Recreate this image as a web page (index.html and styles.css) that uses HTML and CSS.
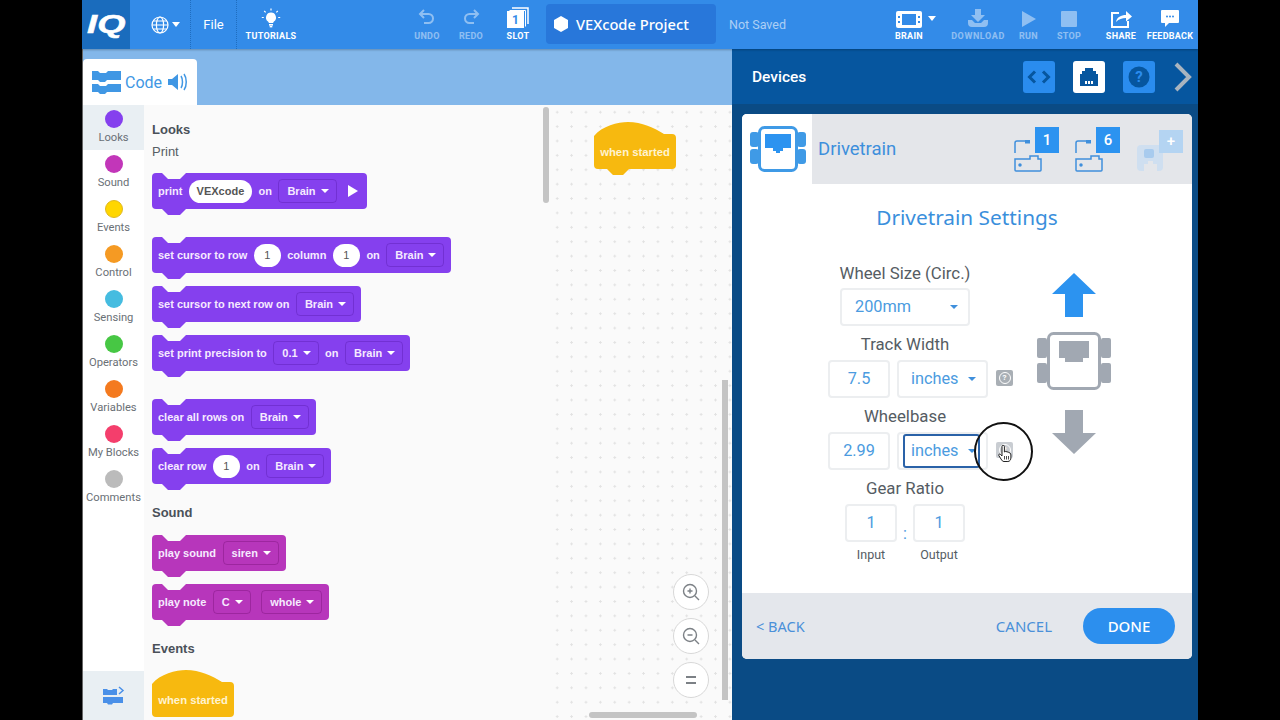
FILE: index.html
```html
<!DOCTYPE html>
<html lang="en">
<head>
    <meta charset="UTF-8">
    <title>VEXcode IQ</title>
    <link rel="stylesheet" href="styles.css">
</head>
<body>
<div class="app">
    <header class="topbar">
        <div class="logo"><span>IQ</span></div>
        <div class="globe">
            <svg width="18" height="18" viewBox="0 0 18 18" fill="none" stroke="#fff" stroke-width="1.2"><circle cx="9" cy="9" r="8"/><ellipse cx="9" cy="9" rx="3.6" ry="8"/><path d="M1 9h16M2.2 5h13.6M2.2 13h13.6"/></svg>
            <i class="caret caret-white"></i>
        </div>
        <div class="file">File</div>
        <div class="tool tool-tutorials">
            <svg width="20" height="20" viewBox="0 0 20 20" fill="#fff"><path d="M10 4.5a5 5 0 0 0-3 9c.6.5.8 1 .8 1.6h4.4c0-.6.2-1.100.8-1.600a5 5 0 0 0-3-9z"/><rect x="8" y="16" width="4" height="1.600"/><rect x="8.700" y="18" width="2.600" height="1.400"/><path d="M10 .5v2M3.200 3l1.500 1.400M16.800 3l-1.500 1.400M.8 9.500h2M17.200 9.500h2" stroke="#fff" stroke-width="1.200"/></svg>
            <span>TUTORIALS</span>
        </div>
        <div class="tool tool-undo off">
            <svg width="20" height="20" viewBox="0 0 20 20" fill="none" stroke="#fff" stroke-width="2"><path d="M3 6h8.500a4.500 4.500 0 0 1 0 9H7"/><path d="M7 2L3 6l4 4"/></svg>
            <span>UNDO</span>
        </div>
        <div class="tool tool-redo off">
            <svg width="20" height="20" viewBox="0 0 20 20" fill="none" stroke="#fff" stroke-width="2"><path d="M17 6H8.500a4.500 4.500 0 0 0 0 9H13"/><path d="M13 2l4 4-4 4"/></svg>
            <span>REDO</span>
        </div>
        <div class="tool tool-slot">
            <svg width="24" height="21" viewBox="0 0 24 21"><path d="M6 1h16v16" fill="none" stroke="#fff" stroke-width="1.500"/><path d="M3.500 3.500h16v16" fill="none" stroke="#fff" stroke-width="1"/><rect x="1" y="4" width="17" height="17" fill="#fff"/><text x="9.500" y="17" text-anchor="middle" class="slot-num">1</text></svg>
            <span>SLOT</span>
        </div>
        <div class="project">
            <svg width="14" height="16" viewBox="0 0 14 16" fill="#fff"><path d="M7 0l7 4v8l-7 4-7-4V4z"/></svg>
            <span>VEXcode Project</span>
        </div>
        <div class="saved">Not Saved</div>
        <div class="tool tool-brain">
            <svg width="26" height="17" viewBox="0 0 26 17"><rect width="26" height="17" rx="2" fill="#fff"/><rect x="6" y="3" width="14" height="11" fill="#338be8"/><rect x="2" y="5" width="2" height="2" fill="#338be8"/><rect x="2" y="10" width="2" height="2" fill="#338be8"/><rect x="22" y="5" width="2" height="2" fill="#338be8"/><rect x="22" y="10" width="2" height="2" fill="#338be8"/></svg>
            <span>BRAIN</span>
        </div>
        <i class="caret caret-white caret-brain"></i>
        <div class="tool tool-download off line">
            <svg width="22" height="20" viewBox="0 0 22 20" fill="#fff"><path d="M8 1h6v6h4l-7 7-7-7h4z"/><path d="M1 12h4l3 3h6l3-3h4v3a4 4 0 0 1-4 4H5a4 4 0 0 1-4-4z"/></svg>
            <span>DOWNLOAD</span>
        </div>
        <div class="tool tool-run off">
            <svg width="16" height="18" viewBox="0 0 16 18" fill="#fff"><path d="M1 1l14 8-14 8z"/></svg>
            <span>RUN</span>
        </div>
        <div class="tool tool-stop off">
            <svg width="16" height="18" viewBox="0 0 16 18" fill="#fff"><rect y="1" width="16" height="16" rx="1"/></svg>
            <span>STOP</span>
        </div>
        <div class="tool tool-share line">
            <svg width="23" height="19" viewBox="0 0 23 19" fill="none" stroke="#fff" stroke-width="2"><path d="M9 4H2v14h16v-6"/><path d="M6 13c1-5 5-7 10-7V2l6 5.500-6 5V9c-4 0-7 1-10 4z" fill="#fff" stroke="none"/></svg>
            <span>SHARE</span>
        </div>
        <div class="tool tool-feedback">
            <svg width="18" height="18" viewBox="0 0 18 18"><path d="M1 0h16a1 1 0 0 1 1 1v11a1 1 0 0 1-1 1H8l-4 4v-4H1a1 1 0 0 1-1-1V1a1 1 0 0 1 1-1z" fill="#fff"/><circle cx="6" cy="6.500" r="1" fill="#338be8"/><circle cx="9" cy="6.500" r="1" fill="#338be8"/><circle cx="12" cy="6.500" r="1" fill="#338be8"/></svg>
            <span>FEEDBACK</span>
        </div>
    </header>

    <div class="main">
        <section class="left">
            <div class="tabs">
                <div class="tab">
                    <svg width="29" height="25" viewBox="0 0 29 25" fill="#4097e4"><path d="M0 1h6l2 2h6l2-2h13v9H15l-2 2H8L6 10H0z"/><path d="M0 14h6l2 2h6l2-2h13v8H15l-2 2H8l-2-2H0z"/></svg>
                    <span>Code</span>
                    <svg class="tab-sound" width="20" height="18" viewBox="0 0 20 18" fill="#4097e4"><path d="M0 6h4l6-5v16l-6-5H0z"/><path d="M13 3c2 3 2 9 0 12M16 1c3 4 3 12 0 16" fill="none" stroke="#4097e4" stroke-width="1.500"/></svg>
                </div>
            </div>
            <div class="editor">
                <nav class="sidebar">
                    <div class="cat cat-on"><i class="dot dot-looks"></i>Looks</div>
                    <div class="cat"><i class="dot dot-sound"></i>Sound</div>
                    <div class="cat"><i class="dot dot-events"></i>Events</div>
                    <div class="cat"><i class="dot dot-control"></i>Control</div>
                    <div class="cat"><i class="dot dot-sensing"></i>Sensing</div>
                    <div class="cat"><i class="dot dot-operators"></i>Operators</div>
                    <div class="cat"><i class="dot dot-variables"></i>Variables</div>
                    <div class="cat"><i class="dot dot-myblocks"></i>My Blocks</div>
                    <div class="cat"><i class="dot dot-comments"></i>Comments</div>
                    <div class="side-foot">
                        <svg width="22" height="20" viewBox="0 0 22 20" fill="#4a90e8"><path d="M0 3h4l1 1h4l1-1h4v6H0z"/><path d="M0 11h20v6H10l-1 1.500H5L4 17H0z"/><path d="M16 1l4 3.500-4 3.500" fill="none" stroke="#4a90e8" stroke-width="1.500"/></svg>
                    </div>
                </nav>

                <div class="flyout">
                    <h3 class="cat-title">Looks</h3>
                    <div class="sub-title">Print</div>
                    <div class="block looks first">print <span class="pill wide">VEXcode</span> on <span class="field">Brain</span><svg class="play" width="11" height="12" viewBox="0 0 11 12" fill="#fff"><path d="M1 0l10 6-10 6z"/></svg></div>
                    <div class="block looks far">set cursor to row <span class="pill">1</span> column <span class="pill">1</span> on <span class="field">Brain</span></div>
                    <div class="block looks">set cursor to next row on <span class="field">Brain</span></div>
                    <div class="block looks">set print precision to <span class="field">0.1</span> on <span class="field">Brain</span></div>
                    <div class="block looks far">clear all rows on <span class="field">Brain</span></div>
                    <div class="block looks">clear row <span class="pill">1</span> on <span class="field">Brain</span></div>
                    <h3 class="cat-title next">Sound</h3>
                    <div class="block sound first">play sound <span class="field">siren</span></div>
                    <div class="block sound">play note <span class="field">C</span><span class="field field-gap">whole</span></div>
                    <h3 class="cat-title next">Events</h3>
                    <div class="hat first">
                        <svg width="82" height="47" viewBox="0 0 82 47"><path d="M0 14C8 4 24 0 34 0c14 0 26 6 36 12h8q4 0 4 4v27q0 4-4 4H4q-4 0-4-4z" fill="#f7b90f"/></svg>
                        <span>when started</span>
                    </div>
                </div>

                <div class="canvas">
                    <div class="hat hat-canvas">
                        <svg width="82" height="54" viewBox="0 0 82 54"><path d="M0 14C8 4 24 0 34 0c14 0 26 6 36 12h8q4 0 4 4v27q0 4-4 4H35l-6 6H19l-6-6H4q-4 0-4-4z" fill="#f7b90f"/></svg>
                        <span>when started</span>
                    </div>
                    <button class="zoom zoom-in">
                        <svg width="20" height="20" viewBox="0 0 20 20" fill="none" stroke="#7c8186" stroke-width="1.400"><circle cx="9" cy="9" r="6.500"/><path d="M14 14l4 4M9 6.500v5M6.500 9h5"/></svg>
                    </button>
                    <button class="zoom zoom-out">
                        <svg width="20" height="20" viewBox="0 0 20 20" fill="none" stroke="#7c8186" stroke-width="1.400"><circle cx="9" cy="9" r="6.500"/><path d="M14 14l4 4M6.500 9h5"/></svg>
                    </button>
                    <button class="zoom zoom-fit">
                        <svg width="20" height="20" viewBox="0 0 20 20" fill="none" stroke="#7c8186" stroke-width="2"><path d="M5 7h10M5 13h10"/></svg>
                    </button>
                </div>
                <i class="scroll scroll-fly"></i>
                <i class="scroll scroll-v"></i>
                <i class="scroll scroll-h"></i>
            </div>
        </section>

        <aside class="right">
            <div class="devices-head">
                <span class="devices-title">Devices</span>
                <div class="head-btn">
                    <svg width="24" height="14" viewBox="0 0 24 14" fill="none" stroke="#06569f" stroke-width="3"><path d="M8 1.500L2.500 7 8 12.500M16 1.500L21.500 7 16 12.500"/></svg>
                </div>
                <div class="head-btn head-btn-on">
                    <svg width="20" height="20" viewBox="0 0 20 20"><path d="M6 1h8v3h3v3h2v12H1V7h2V4h3z" fill="#06569f"/><path d="M6 14h2v3H6zM9 14h2v3H9zM12 14h2v3h-2z" fill="#fff"/></svg>
                </div>
                <div class="head-btn">
                    <svg width="22" height="22" viewBox="0 0 22 22"><circle cx="11" cy="11" r="10.500" fill="#06569f"/><text x="11" y="16" text-anchor="middle" class="help-big">?</text></svg>
                </div>
                <svg class="head-next" width="20" height="30" viewBox="0 0 20 30" fill="none" stroke="#a9b4bf" stroke-width="4"><path d="M3 2l13 13L3 28"/></svg>
            </div>
            <div class="card">
                <div class="card-head">
                    <div class="card-icon">
                        <svg width="56" height="46" viewBox="0 0 56 46">
                            <rect x="0" y="6" width="9" height="15" rx="3" fill="#3f9ae6"/><rect x="0" y="23" width="9" height="15" rx="3" fill="#3f9ae6"/>
                            <rect x="47" y="6" width="9" height="15" rx="3" fill="#3f9ae6"/><rect x="47" y="23" width="9" height="15" rx="3" fill="#3f9ae6"/>
                            <rect x="9.500" y="1.500" width="37" height="43" rx="5" fill="#fff" stroke="#3f9ae6" stroke-width="3"/>
                            <path d="M15 8h26v14h-8v3h-3v2h-4v-2h-3v-3h-8z" fill="#2c93f0"/>
                        </svg>
                    </div>
                    <span class="card-name">Drivetrain</span>
                    <div class="ports">
                        <div class="port">
                            <svg width="28" height="32" viewBox="0 0 28 32" fill="none" stroke="#3f8fdc" stroke-width="1.500"><path d="M1 13V3a2 2 0 0 1 2-2h9"/><rect x="11" y="0" width="5" height="3.500" fill="#3f8fdc" stroke="none"/><path d="M1 19h15v-3h8v3h3v11a1 1 0 0 1-1 1H2a1 1 0 0 1-1-1z"/><circle cx="6" cy="25" r="1" fill="#3f8fdc"/></svg>
                            <b class="port-num">1</b>
                        </div>
                        <div class="port">
                            <svg width="28" height="32" viewBox="0 0 28 32" fill="none" stroke="#3f8fdc" stroke-width="1.500"><path d="M1 13V3a2 2 0 0 1 2-2h9"/><rect x="11" y="0" width="5" height="3.500" fill="#3f8fdc" stroke="none"/><path d="M1 19h15v-3h8v3h3v11a1 1 0 0 1-1 1H2a1 1 0 0 1-1-1z"/><circle cx="6" cy="25" r="1" fill="#3f8fdc"/></svg>
                            <b class="port-num">6</b>
                        </div>
                        <div class="port port-add">
                            <svg width="28" height="32" viewBox="0 0 28 32"><rect x="1" y="5" width="26" height="26" rx="4" fill="#cfdff0"/><rect x="8" y="9" width="10" height="9" rx="2" fill="#a8cbee"/><path d="M8 31v-7h4v-3h5v3h4v7z" fill="#e4e6ea"/></svg>
                            <b class="port-num">+</b>
                        </div>
                    </div>
                </div>
                <div class="card-body">
                    <h2 class="settings-title">Drivetrain Settings</h2>
                    <div class="settings">
                        <div class="form">
                            <div class="lbl">Wheel Size (Circ.)</div>
                            <div class="box sel sel-wheel">200mm</div>
                            <div class="lbl lbl-next">Track Width</div>
                            <div class="form-row">
                                <div class="box num">7.5</div>
                                <div class="box sel sel-unit">inches</div>
                                <div class="help"><span class="help-q">?</span></div>
                            </div>
                            <div class="lbl lbl-next">Wheelbase</div>
                            <div class="form-row">
                                <div class="box num">2.99</div>
                                <div class="box sel sel-unit sel-focus">inches<i class="focus-ring"></i></div>
                                <div class="help help-hover"><span class="help-q">?</span>
                                    <i class="click-ring"></i>
                                    <svg class="hand" width="14" height="18" viewBox="0 0 14 18"><path d="M4 1.500a1.200 1.200 0 0 1 2.400 0V7l1.200-.5 1.400.3 1.300.4 1.700.8c.6.500.9 1 .9 2v3c0 1.500-1 3.500-3 3.500H6c-1.500 0-2-1-3-2.500L.8 10.500c-.5-1 .7-2 1.700-1L4 11z" fill="#fff" stroke="#222" stroke-width="1"/><path d="M6.500 11v3.500M8.500 11v3.500M10.500 11v3.500" stroke="#222" stroke-width=".8"/></svg>
                                </div>
                            </div>
                            <div class="lbl lbl-next">Gear Ratio</div>
                            <div class="gear">
                                <div class="gear-col">
                                    <div class="box num gear-num">1</div>
                                    <small class="gear-lbl">Input</small>
                                </div>
                                <span class="gear-colon">:</span>
                                <div class="gear-col">
                                    <div class="box num gear-num">1</div>
                                    <small class="gear-lbl">Output</small>
                                </div>
                            </div>
                        </div>
                        <div class="diagram">
                            <svg width="44" height="44" viewBox="0 0 44 44" fill="#2c93f0"><path d="M22 0l22 21H31v23H13V21H0z"/></svg>
                            <svg class="robot" width="74" height="58" viewBox="0 0 74 58">
                                <rect x="0" y="6" width="10" height="20" rx="2" fill="#a1a8b2"/><rect x="0" y="31" width="10" height="20" rx="2" fill="#a1a8b2"/>
                                <rect x="64" y="6" width="10" height="20" rx="2" fill="#a1a8b2"/><rect x="64" y="31" width="10" height="20" rx="2" fill="#a1a8b2"/>
                                <rect x="11.500" y="1.500" width="51" height="55" rx="5" fill="#fff" stroke="#a1a8b2" stroke-width="3"/>
                                <path d="M22 9h30v17h-6v4H28v-4h-6z" fill="#a1a8b2"/>
                            </svg>
                            <svg width="44" height="44" viewBox="0 0 44 44" fill="#a1a8b2"><path d="M13 0h18v23h13L22 44 0 23h13z"/></svg>
                        </div>
                    </div>
                </div>
                <div class="card-foot">
                    <span class="foot-link">&lt; BACK</span>
                    <span class="foot-link foot-cancel">CANCEL</span>
                    <button class="done">DONE</button>
                </div>
            </div>
        </aside>
    </div>
</div>
</body>
</html>
```
FILE: styles.css
```css
* {
    box-sizing: border-box;
}

html, body {
    height: 100%;
}

body {
    margin: 0;
    background-color: #000;
    font-family: Roboto, 'Liberation Sans', sans-serif;
    overflow: hidden;
}

i {
    display: block;
}

.app {
    width: 1116px;
    height: 720px;
    margin: 0 auto;
    display: flex;
    flex-direction: column;
    background-color: #fff;
}

/* top bar */
.topbar {
    height: 49px;
    flex: none;
    display: flex;
    align-items: stretch;
    background-color: #338be8;
    color: #fff;
    box-shadow: 0 1px 2px rgba(0, 0, 0, 0.25);
    position: relative;
    z-index: 2;
}

.logo {
    width: 48px;
    background-color: #1a6cbd;
    font: italic 700 25px/49px 'Liberation Sans', sans-serif;
    text-align: center;
    -webkit-text-stroke: 0.5px #fff;
}

.logo span {
    display: inline-block;
    transform: scaleX(1.45);
}

.globe {
    width: 61px;
    display: flex;
    align-items: center;
    gap: 3px;
    padding-left: 21px;
    border-right: 1px dotted #1f6dbf;
}

.caret {
    width: 0;
    height: 0;
    border-left: 4px solid transparent;
    border-right: 4px solid transparent;
    border-top: 5px solid #fff;
}

.file {
    width: 46px;
    font-size: 13px;
    line-height: 49px;
    text-align: center;
    border-right: 1px dotted #1f6dbf;
}

.tool {
    display: flex;
    flex-direction: column;
    align-items: center;
    justify-content: flex-end;
    height: 42px;
    font-size: 9px;
    font-weight: 700;
    letter-spacing: 0.3px;
    line-height: 11px;
    gap: 3px;
}

.tool svg {
    flex: none;
}

.off {
    opacity: 0.45;
}

.tool-tutorials {
    width: 68px;
}

.tool-undo {
    width: 44px;
    margin-left: 100px;
}

.tool-redo {
    width: 44px;
}

.tool-slot {
    width: 44px;
    margin-left: 3px;
}

.slot-num {
    font: 700 12px Roboto, sans-serif;
    fill: #338be8;
}

.project {
    width: 170px;
    height: 40px;
    margin: 4px 0 0 6px;
    padding-left: 8px;
    display: flex;
    align-items: center;
    gap: 8px;
    background-color: #2877da;
    border-radius: 4px;
    font-family: 'Noto Sans', sans-serif;
    font-size: 14.700px;
    font-weight: 500;
}

.saved {
    width: 160px;
    margin-left: 13px;
    font-size: 12.500px;
    line-height: 49px;
    color: rgba(255, 255, 255, 0.6);
}

.tool-brain {
    width: 40px;
}

.caret-brain {
    margin: 16px 0 0 -1px;
    align-self: flex-start;
}

.tool-download {
    width: 60px;
    margin-left: 12px;
    letter-spacing: 0.6px;
}

.tool-run {
    width: 37px;
    margin-left: 2px;
}

.tool-stop {
    width: 44px;
}

.tool-share {
    width: 50px;
    margin-left: 5px;
}

.tool-feedback {
    width: 50px;
    margin-left: -1px;
}

.main {
    flex: 1;
    display: flex;
    min-height: 0;
}

/* code side */
.left {
    width: 650px;
    display: flex;
    flex-direction: column;
    border-left: 1px solid #666;
}

.tabs {
    height: 56px;
    flex: none;
    padding-top: 10px;
    background-color: #83b7ea;
}

.tab {
    width: 114px;
    height: 46px;
    display: flex;
    align-items: center;
    gap: 4px;
    padding-left: 9px;
    background-color: #fff;
    border-radius: 4px 4px 0 0;
    color: #4097e4;
    font-size: 16px;
}

.tab-sound {
    margin-left: 2px;
}

.editor {
    flex: 1;
    display: flex;
    position: relative;
    min-height: 0;
    background-color: #fafafa;
}

.sidebar {
    width: 61px;
    flex: none;
    display: flex;
    flex-direction: column;
    position: relative;
    background-color: #fff;
}

.cat {
    height: 45px;
    flex: none;
    display: flex;
    flex-direction: column;
    align-items: center;
    padding-top: 5px;
    font-size: 11.200px;
    line-height: 14px;
    color: #6a7076;
    gap: 3px;
    white-space: nowrap;
}

.cat-on {
    background-color: #e9eff3;
}

.dot {
    width: 18px;
    height: 18px;
    flex: none;
    border-radius: 50%;
}

.dot-looks { background-color: #8540ee; }
.dot-sound { background-color: #c236b9; }
.dot-events { background-color: #ffd600; border: 1px solid #e0b820; }
.dot-control { background-color: #f59a23; }
.dot-sensing { background-color: #45bce0; }
.dot-operators { background-color: #47c744; }
.dot-variables { background-color: #f47a1f; }
.dot-myblocks { background-color: #f43e6c; }
.dot-comments { background-color: #bbb; }

.side-foot {
    margin-top: auto;
    height: 49px;
    display: flex;
    align-items: center;
    justify-content: center;
    background-color: #e9eff3;
}

.flyout {
    width: 406px;
    flex: none;
    padding: 17px 0 0 8px;
    overflow: hidden;
    font-family: 'Liberation Sans', sans-serif;
}

.cat-title {
    margin: 0;
    font-size: 13px;
    font-weight: 700;
    line-height: 16px;
    color: #4a5159;
}

.cat-title.next {
    margin-top: 21px;
}

.sub-title {
    margin: 6px 0 -1px;
    font-size: 13px;
    line-height: 16px;
    color: #575e65;
}

.block {
    position: relative;
    width: fit-content;
    height: 36px;
    margin-top: 13px;
    padding: 0 7px 0 6px;
    display: flex;
    align-items: center;
    gap: 6.500px;
    border-radius: 4px;
    color: #f6eaff;
    font-size: 11px;
    font-weight: 700;
    white-space: nowrap;
}

.block::before,
.block::after {
    content: "";
    position: absolute;
    left: 10px;
    width: 24px;
    height: 6px;
    clip-path: polygon(0 0, 100% 0, 75% 100%, 25% 100%);
}

.block::before {
    top: 0;
    background-color: #fafafa;
}

.block::after {
    top: 100%;
}

.looks,
.looks::after {
    background-color: #8540ee;
}

.sound,
.sound::after {
    background-color: #b736bb;
}

.block.first {
    margin-top: 14px;
}

.hat.first {
    margin-top: 13px;
}

.block.far {
    margin-top: 28px;
}

.pill {
    width: 27px;
    height: 23px;
    display: flex;
    align-items: center;
    justify-content: center;
    background-color: #fff;
    border-radius: 12px;
    color: #555;
    font-weight: 400;
}

.pill.wide {
    width: 63px;
    font-weight: 700;
}

.field {
    height: 24px;
    padding: 0 7px 0 8px;
    display: flex;
    align-items: center;
    gap: 5px;
    border: 1px solid rgba(80, 20, 160, 0.35);
    border-radius: 4px;
}

.field::after {
    content: "";
    border-left: 4px solid transparent;
    border-right: 4px solid transparent;
    border-top: 4px solid #fff;
}

.sound .field {
    border-color: rgba(110, 10, 110, 0.35);
}

.field-gap {
    margin-left: 4px;
}

.play {
    margin: 0 2px 0 4px;
}

.hat {
    position: relative;
    width: 82px;
    height: 47px;
    color: #fff3d0;
    font-size: 11.300px;
    font-weight: 700;
}

.hat svg {
    display: block;
}

.hat span {
    position: absolute;
    left: 0;
    right: 0;
    top: 24px;
    text-align: center;
    font-family: 'Liberation Sans', sans-serif;
    white-space: nowrap;
}

.canvas {
    flex: 1;
    position: relative;
    background-color: #fafafa;
    background-image: radial-gradient(#e2e2e2 1px, transparent 1.200px);
    background-size: 14.400px 14.400px;
}

.hat-canvas {
    position: absolute;
    left: 44px;
    top: 17px;
}

.zoom {
    position: absolute;
    left: 123px;
    width: 36px;
    height: 36px;
    padding: 0;
    display: flex;
    align-items: center;
    justify-content: center;
    background-color: #fff;
    border: 1px solid #d8d8d8;
    border-radius: 50%;
}

.zoom-in { top: 469px; }
.zoom-out { top: 513px; }
.zoom-fit { top: 557px; }

.scroll {
    position: absolute;
    background-color: #c4c4c4;
    border-radius: 3px;
}

.scroll-fly {
    left: 460px;
    top: 2px;
    width: 6px;
    height: 96px;
}

.scroll-v {
    left: 639px;
    top: 275px;
    width: 6px;
    height: 320px;
    border-radius: 0;
}

.scroll-h {
    left: 506px;
    top: 607px;
    width: 108px;
    height: 6px;
}

/* devices side */
.right {
    flex: 1;
    display: flex;
    flex-direction: column;
    background-color: #0a4b85;
}

.devices-head {
    height: 55px;
    flex: none;
    display: flex;
    align-items: center;
    padding-left: 20px;
    background-color: #06569f;
    color: #fff;
}

.devices-title {
    width: 271px;
    font-size: 15.500px;
    font-weight: 500;
}

.head-btn {
    width: 32px;
    height: 32px;
    margin-right: 18px;
    display: flex;
    align-items: center;
    justify-content: center;
    background-color: #2a8cee;
    border-radius: 3px;
}

.head-btn-on {
    background-color: #fff;
}

.help-big {
    font: 700 15px Roboto, sans-serif;
    fill: #2a8cee;
}

.card {
    width: 450px;
    height: 545px;
    margin: 10px 0 0 10px;
    display: flex;
    flex-direction: column;
    background-color: #fff;
    border-radius: 5px;
    overflow: hidden;
}

.card-head {
    height: 70px;
    flex: none;
    display: flex;
    align-items: center;
    background-color: #e4e6ea;
}

.card-icon {
    width: 70px;
    height: 70px;
    padding-left: 8px;
    display: flex;
    align-items: center;
    background-color: #fff;
}

.card-name {
    margin-left: 6px;
    font-size: 18.500px;
    color: #3d8fdc;
}

.ports {
    margin-left: auto;
    margin-right: 9px;
    display: flex;
    gap: 16px;
}

.port {
    position: relative;
    width: 45px;
    height: 45px;
    display: flex;
    align-items: flex-end;
}

.port-add {
    width: 47px;
}

.port-num {
    position: absolute;
    right: 0;
    top: 0;
    width: 24px;
    height: 26px;
    background-color: #2c93f0;
    color: #fff;
    font-size: 15px;
    font-weight: 500;
    line-height: 26px;
    text-align: center;
}

.port-add .port-num {
    top: 3px;
    height: 23px;
    line-height: 23px;
    background-color: #b4d4f2;
}

.card-body {
    flex: 1;
    padding-top: 19px;
}

.settings-title {
    margin: 0;
    font-family: 'Noto Sans', sans-serif;
    font-size: 20.800px;
    font-weight: 400;
    line-height: 28px;
    text-align: center;
    color: #3a8fdc;
}

.settings {
    margin-top: 33px;
    padding-left: 78px;
    display: flex;
}

.form {
    width: 170px;
    display: flex;
    flex-direction: column;
    align-items: center;
}

.lbl {
    font-size: 16.800px;
    line-height: 18px;
    color: #555c63;
    white-space: nowrap;
}

.lbl-next {
    margin-top: 9px;
}

.box {
    height: 38px;
    flex: none;
    background-color: #fff;
    border: 2px solid #eceef0;
    border-radius: 4px;
    font-size: 16.300px;
    line-height: 34px;
    color: #4b9be0;
}

.sel {
    position: relative;
}

.sel::after {
    content: "";
    position: absolute;
    top: 15px;
    right: 10px;
    border-left: 4px solid transparent;
    border-right: 4px solid transparent;
    border-top: 4px solid #3f8fdc;
}

.sel-wheel {
    width: 130px;
    margin-top: 6px;
    padding-left: 13px;
}

.sel-unit {
    width: 91px;
    margin-left: 7px;
    padding-left: 12px;
}

.focus-ring {
    position: absolute;
    left: 4px;
    top: 0;
    right: 6px;
    bottom: 0;
    border: 2px solid #2a62a8;
    border-radius: 3px;
}

.form-row {
    width: 170px;
    margin-top: 7px;
    padding-left: 8px;
    display: flex;
    align-items: center;
}

.num {
    width: 62px;
    text-align: center;
}

.help {
    position: relative;
    width: 17px;
    height: 16px;
    margin: -2px 0 0 8px;
    flex: none;
    display: flex;
    align-items: center;
    justify-content: center;
    background-color: #a9afb5;
    border-radius: 2px;
}

.help-q {
    width: 12px;
    height: 12px;
    border: 1.500px solid #fff;
    border-radius: 50%;
    color: #fff;
    font-size: 8px;
    font-weight: 700;
    line-height: 9px;
    text-align: center;
}

.help-hover {
    background-color: #c9cdd2;
}

.click-ring {
    position: absolute;
    left: -22px;
    top: -20px;
    width: 59px;
    height: 59px;
    border: 2.500px solid #111;
    border-radius: 50%;
}

.hand {
    position: absolute;
    left: 2px;
    top: 3px;
}

.gear {
    margin-top: 7px;
    display: flex;
}

.gear-col {
    display: flex;
    flex-direction: column;
    align-items: center;
}

.gear-num {
    width: 52px;
}

.gear-lbl {
    margin-top: 5px;
    font-size: 12.500px;
    line-height: 16px;
    color: #555c63;
}

.gear-colon {
    width: 16px;
    padding-top: 16px;
    text-align: center;
    font-size: 16px;
    line-height: 28px;
    color: #4b9be0;
}

.diagram {
    width: 74px;
    margin-left: 47px;
    padding-top: 9px;
    display: flex;
    flex-direction: column;
    align-items: center;
}

.robot {
    margin: 15px 0 20px;
}

.card-foot {
    height: 66px;
    flex: none;
    display: flex;
    align-items: center;
    padding: 0 17px 0 14px;
    background-color: #e4e7ec;
    font-family: 'Noto Sans', sans-serif;
}

.foot-link {
    font-size: 14.500px;
    color: #4a90d9;
}

.foot-cancel {
    margin-left: auto;
    font-size: 15px;
}

.done {
    width: 92px;
    height: 36px;
    margin-left: 31px;
    background-color: #2c8fee;
    border: none;
    border-radius: 18px;
    color: #fff;
    font-family: 'Noto Sans', sans-serif;
    font-size: 15px;
    font-weight: 500;
    cursor: pointer;
}
```
